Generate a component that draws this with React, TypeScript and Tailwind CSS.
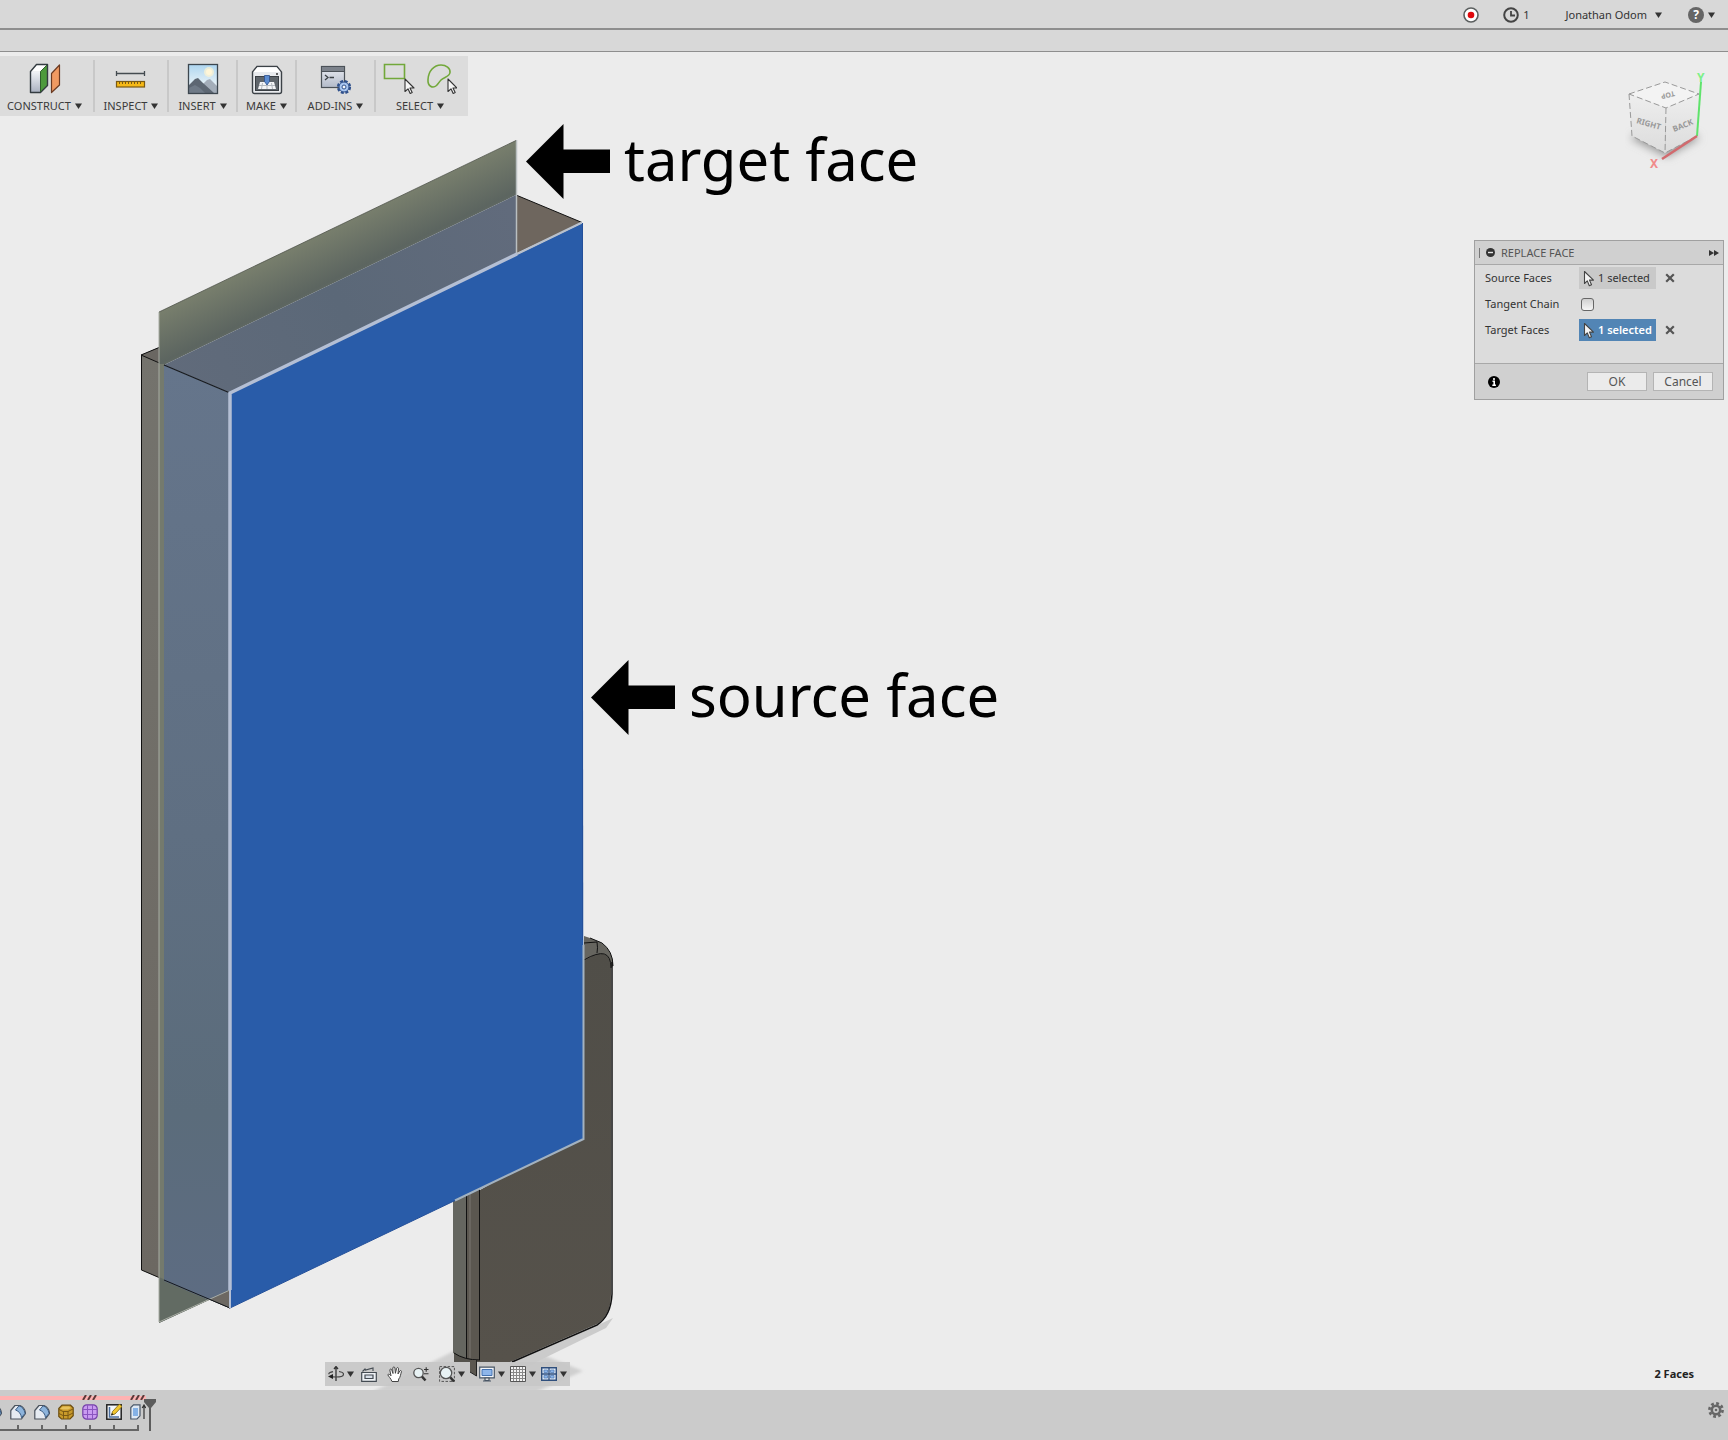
import React from 'react';
import clsx from 'clsx';

const Caret = ({ className }: { className?: string }) => (
  <svg width="7" height="6" viewBox="0 0 7 6" className={clsx('shrink-0', className)} aria-hidden="true">
    <path d="M0 0.5h7L3.5 6z" fill="#333" />
  </svg>
);

const Cursor = ({ className }: { className?: string }) => (
  <svg width="12" height="17" viewBox="0 0 12 17" className={className} aria-hidden="true">
    <path d="M1.5 1.5v12l2.8-2.6 2 4.8 2.2-1-2-4.6h4z" fill="#f4f4f4" stroke="#444" strokeWidth="1.1" strokeLinejoin="round" />
  </svg>
);

/* Toolbar icons */

const ConstructIcon = () => (
  <svg width="32" height="32" viewBox="0 0 32 32" className="shrink-0" aria-hidden="true">
    <defs>
      <linearGradient id="slab" x1="0" y1="0" x2="0" y2="1">
        <stop offset="0" stopColor="#f2f4f7" />
        <stop offset="1" stopColor="#a9b0bf" />
      </linearGradient>
    </defs>
    <path d="M1.5 8.5L7.5 1.5H18.5L11.5 8.5z" fill="#fff" />
    <path d="M1.5 8.5h10v21h-10z" fill="url(#slab)" />
    <path d="M11.5 8.5l7-7v21l-7 7z" fill="#4d9a3c" />
    <path d="M1.5 8.5l6-7h11v21l-7 7h-10z" fill="none" stroke="#333b40" strokeWidth="1.4" strokeLinejoin="round" />
    <path d="M11.5 29V8.5l6.5-6.5" fill="none" stroke="#2f5f2b" />
    <path d="M22.5 10.5l8-8.5v20l-8 7.5z" fill="#f09a62" stroke="#6b3a22" strokeWidth="1.2" strokeLinejoin="round" />
  </svg>
);

const InspectIcon = () => (
  <svg width="32" height="32" viewBox="0 0 32 32" className="shrink-0" aria-hidden="true">
    <path d="M1.5 8v5M29.5 8v5M1.5 10.5h28" stroke="#444b50" strokeWidth="1.3" fill="none" />
    <rect x="1.5" y="18.5" width="28" height="5.5" fill="#f6b916" stroke="#7a5a14" strokeWidth="1.2" />
    <path d="M4.5 19v2M7.5 19v2M10.5 19v2M13.5 19v2M16.5 19v2M19.5 19v2M22.5 19v2M25.5 19v2" stroke="#7a5a14" />
  </svg>
);

const InsertIcon = () => (
  <svg width="32" height="32" viewBox="0 0 32 32" className="shrink-0" aria-hidden="true">
    <defs>
      <linearGradient id="sky" x1="0" y1="0" x2="0" y2="1">
        <stop offset="0" stopColor="#aed6f0" />
        <stop offset="0.7" stopColor="#e6f1f7" />
      </linearGradient>
    </defs>
    <rect x="1.5" y="1.5" width="29" height="29" fill="url(#sky)" />
    <circle cx="22" cy="9" r="5" fill="#fff3cf" opacity="0.7" />
    <circle cx="22" cy="9" r="3" fill="#fff6d8" />
    <path d="M14 23l6-6 3-1 7 7v7H14z" fill="#a3adb9" />
    <path d="M2 22l6-6 3-1 5 5 11 10H2z" fill="#5d6773" />
    <path d="M2 25l6-3 5 3 5 5H2z" fill="#6f7a87" />
    <rect x="1.5" y="1.5" width="29" height="29" fill="none" stroke="#3d474f" strokeWidth="1.3" />
  </svg>
);

const MakeIcon = () => (
  <svg width="32" height="32" viewBox="0 0 32 32" className="shrink-0" aria-hidden="true">
    <path d="M1.5 9L6 3.5h20L30.5 9v19.5a2 2 0 0 1-2 2h-25a2 2 0 0 1-2-2z" fill="#e9ebee" stroke="#3c4247" strokeWidth="1.4" />
    <path d="M2.5 9L6.5 4.3h19L29.5 9z" fill="#fff" />
    <circle cx="26" cy="11" r="1" fill="#333" />
    <rect x="4.5" y="13.5" width="23" height="14" fill="#5f656b" stroke="#3a3f44" />
    <path d="M9 19h14l2 7H7z" fill="#f3f4f6" />
    <path d="M8 22.5h16M11.5 20l-1 6M16 20v6M20.5 20l1 6" stroke="#b4b9bf" />
    <path d="M13.5 12.5h5v6L16 22l-2.5-3.5z" fill="#5b8bd0" stroke="#2c4f8c" strokeWidth="0.8" />
  </svg>
);

const AddInsIcon = () => (
  <svg width="32" height="32" viewBox="0 0 32 32" className="shrink-0" aria-hidden="true">
    <defs>
      <linearGradient id="term" x1="0" y1="0" x2="0" y2="1">
        <stop offset="0" stopColor="#e9ecf2" />
        <stop offset="1" stopColor="#b3bac9" />
      </linearGradient>
    </defs>
    <rect x="1.5" y="3.5" width="23" height="21" fill="url(#term)" stroke="#4b5158" strokeWidth="1.2" />
    <rect x="2" y="4" width="22" height="4.5" fill="#7c828b" />
    <path d="M2 8.5h22" stroke="#4b5158" />
    <path d="M5 12l3 2.5-3 2.5M9.5 14.5h4.5" fill="none" stroke="#3c4247" strokeWidth="1.3" />
    <circle cx="24" cy="24" r="5.6" fill="none" stroke="#2f508c" strokeWidth="3" strokeDasharray="2.8 1.6" />
    <circle cx="24" cy="24" r="5" fill="#a9c6ef" stroke="#2f508c" />
    <circle cx="24" cy="24" r="2" fill="#f5f8fc" stroke="#2f508c" />
  </svg>
);

const SelectIcon = () => (
  <svg width="74" height="32" viewBox="0 0 74 32" className="shrink-0" aria-hidden="true">
    <path d="M1.5 1.5h20v14h-20z" fill="none" stroke="#72a83a" strokeWidth="1.6" />
    <path d="M22 16v12.5l3-2.7 2.2 4.7 2-1-2.2-4.5h4z" fill="#f6f6f6" stroke="#333" strokeWidth="1.1" strokeLinejoin="round" />
    <path d="M53.5 22.5c-4 3.5-9 .5-8.5-6C45.5 8 51 2 58 2c5 0 9.5 3 9 7.5-.5 4.5-6 4.5-9 7.5-1.8 1.8-2.5 3.5-4.5 5.5z" fill="none" stroke="#72a83a" strokeWidth="1.6" />
    <path d="M65 16v12.5l3-2.7 2.2 4.7 2-1-2.2-4.5h4z" fill="#f6f6f6" stroke="#333" strokeWidth="1.1" strokeLinejoin="round" />
  </svg>
);

const tools = [
  { label: 'CONSTRUCT', icon: <ConstructIcon />, cell: 'w-[93px] pr-1' },
  { label: 'INSPECT', icon: <InspectIcon />, cell: 'w-[74px] border-l-2' },
  { label: 'INSERT', icon: <InsertIcon />, cell: 'w-[69px] border-l-2' },
  { label: 'MAKE', icon: <MakeIcon />, cell: 'w-[59px] border-l-2' },
  { label: 'ADD-INS', icon: <AddInsIcon />, cell: 'w-[79px] border-l-2' },
  { label: 'SELECT', icon: <SelectIcon />, cell: 'w-[94px] border-l-2 pr-1' },
];

const Toolbar = () => (
  <div className="absolute left-0 top-1 flex bg-[#dcdcdc] py-1">
    {tools.map((tool) => (
      <button
        key={tool.label}
        className={clsx('flex h-[52px] flex-col items-center justify-end gap-[5px] border-[#c8c8c8]', tool.cell)}
      >
        {tool.icon}
        <span className="flex items-center gap-1 whitespace-nowrap text-[11px] leading-3 text-[#3a3a3a]">
          {tool.label}
          <Caret />
        </span>
      </button>
    ))}
  </div>
);

/* Top bars */

const TopBar = () => (
  <header className="shrink-0">
    <div className="flex h-[30px] items-center justify-end border-b-2 border-[#8e8e8e] bg-[#d8d8d8] pr-[13px] pt-[2px] text-[11px] text-[#333]">
      <button aria-label="Record" className="mr-6">
        <svg width="16" height="16" viewBox="0 0 16 16">
          <circle cx="8" cy="8" r="7" fill="#fff" stroke="#5b5f5f" strokeWidth="1.6" />
          <circle cx="8" cy="8" r="3.3" fill="#e0080c" />
        </svg>
      </button>
      <button className="mr-9 flex items-center gap-1">
        <svg width="16" height="16" viewBox="0 0 16 16" aria-hidden="true">
          <circle cx="8" cy="8" r="6.8" fill="none" stroke="#444" strokeWidth="2" />
          <path d="M8 4v4.5h4" fill="none" stroke="#444" strokeWidth="1.8" />
        </svg>
        1
      </button>
      <button className="mr-[26px] flex items-center gap-2">
        Jonathan Odom
        <Caret />
      </button>
      <button aria-label="Help" className="flex items-center gap-1">
        <span className="flex size-4 items-center justify-center rounded-full bg-[#666] text-xs font-bold leading-4 text-white">?</span>
        <Caret />
      </button>
    </div>
    <div className="h-[22px] border-b border-[#8e8e8e] bg-[#d8d8d8]" />
  </header>
);

/* 3D model; the view box starts at the top edge of the viewport area */

const Model = () => (
  <svg width="640" height="1338" viewBox="0 52 640 1338" className="absolute left-0 top-0" aria-hidden="true">
    <defs>
      <linearGradient id="plane" gradientUnits="userSpaceOnUse" x1="310" y1="230" x2="338" y2="288">
        <stop offset="0" stopColor="#7d836f" />
        <stop offset="0.85" stopColor="#5c6560" />
        <stop offset="1" stopColor="#656d66" />
      </linearGradient>
      <linearGradient id="planeTop" gradientUnits="userSpaceOnUse" x1="164" y1="390" x2="517" y2="220">
        <stop offset="0" stopColor="#616b7b" />
        <stop offset="0.5" stopColor="#5b6878" />
        <stop offset="1" stopColor="#616b7c" />
      </linearGradient>
      <linearGradient id="side" x1="0" y1="0" x2="0" y2="1">
        <stop offset="0" stopColor="#65758b" />
        <stop offset="0.5" stopColor="#5f6f82" />
        <stop offset="0.8" stopColor="#5b6c7b" />
        <stop offset="1" stopColor="#5d6c82" />
      </linearGradient>
      <linearGradient id="backStrip" x1="0" y1="0" x2="0" y2="1">
        <stop offset="0" stopColor="#74736d" />
        <stop offset="1" stopColor="#6c6862" />
      </linearGradient>
      <linearGradient id="phone" x1="0" y1="0" x2="0" y2="1">
        <stop offset="0" stopColor="#504e48" />
        <stop offset="1" stopColor="#56524b" />
      </linearGradient>
      <filter id="soft" x="-10%" y="-10%" width="120%" height="120%">
        <feGaussianBlur stdDeviation="1.5" />
      </filter>
    </defs>

    {/* Ground shadow */}
    <path d="M454 1351L372 1392H536L583 1371 543 1355 540 1340z" fill="#cfcfcf" filter="url(#soft)" />
    <path d="M510 1364L596 1326 613 1318 606 1328 520 1370z" fill="#cbcbcb" />

    {/* Rear body */}
    <path d="M480 1190L584 1130V960L596 954Q611 950 611 967V1294Q611 1315 597 1324L510 1362H480z" fill="url(#phone)" />
    <path d="M584 936L590 938 600 942Q613 950 613 966L611 968Q611 952 596 954L584 961z" fill="#66655f" />
    <path d="M584 943L597 942Q598 948 597 953M584 960Q611 944 611 968M590 938L602 943Q613 951 613 966" fill="none" stroke="#111" />
    <path d="M612 962V1294Q611 1316 597 1325L512 1362" fill="none" stroke="#111" strokeWidth="1.5" />
    <path d="M453 1195H467V1359L453 1353z" fill="#656660" />
    <path d="M466 1190H480V1360H466z" fill="#5b5750" />
    <path d="M470 1185V1359" stroke="#6a6660" strokeWidth="2" />
    <path d="M454 1353L466 1358 480 1360 500 1362H454z" fill="#55534d" />
    <path d="M466.5 1190V1358M479.5 1185V1360M454 1353Q464 1360 480 1360" fill="none" stroke="#111" />

    {/* Box behind the plane */}
    <path d="M141 355L160 347V1278L141 1270z" fill="url(#backStrip)" />
    <path d="M141 355L160 347V363z" fill="#6a6762" />
    <path d="M516 195L582 222.5 517 253z" fill="#6e665e" />
    <path d="M141 355L164 365M141.5 355V1270L230 1308M516 195L582 222.5M141 355L159 347.5" fill="none" stroke="#111" />
    <path d="M205 1297L230 1286V1308z" fill="#6c6862" />

    {/* Target plane */}
    <path d="M159 312L516 140.5V195L164 365V1280L209 1300 159 1323z" fill="url(#plane)" />
    <path d="M159 364H165V1281H159z" fill="#747a6d" />
    <path d="M159 1277L209 1300 159 1323z" fill="#626b63" />
    <path d="M164 365L516 195 517 254 230 393z" fill="url(#planeTop)" />
    <path d="M164 365L230 393V1290L209 1300 164 1281z" fill="url(#side)" />
    <path d="M159 312V1322L230 1290" fill="none" stroke="#a9ada4" />
    <path d="M516.5 140V254" fill="none" stroke="#b9bfc0" strokeWidth="1.5" />
    <path d="M159 312L516 140.5" stroke="#44483f" strokeWidth="0.7" />
    <path d="M164 365L230 393" stroke="#15181c" strokeWidth="1.2" />
    <path d="M164 1280L230 1308" stroke="#15181c" />

    {/* Source face */}
    <path d="M231 393L582.5 223 583.5 1139 230 1308z" fill="#295ca9" />
    <path d="M230 1308L455 1200.5" stroke="#24509a" strokeWidth="1" />
    <path d="M455 1200.5L583.5 1139V945" fill="none" stroke="#a3b2c0" strokeWidth="2" />
    <path d="M517 254L582 222.5" stroke="#b9c1cc" strokeWidth="2" />
    <path d="M230 1308V1290" stroke="#b4bfd4" strokeWidth="2" />
    <path d="M230 1290V393L517 254" fill="none" stroke="#b4bfd4" strokeWidth="3.5" />
    <path d="M582.5 223V940" stroke="#24509a" />
  </svg>
);

const Arrow = () => (
  <svg width="84" height="75" viewBox="0 0 84 75" className="shrink-0" aria-hidden="true">
    <path d="M0 37.5L37.5 0V25.5H84V49H37.5V75z" fill="#000" />
  </svg>
);

const Note = ({ text, className }: { text: string; className: string }) => (
  <div className={clsx('absolute flex items-center gap-[14px]', className)}>
    <Arrow />
    <p className="whitespace-nowrap pb-[6px] text-[58px] leading-[68px] text-black">{text}</p>
  </div>
);

const ViewCube = () => (
  <svg width="90" height="110" viewBox="1625 65 90 110" className="absolute right-[13px] top-[13px]" role="img" aria-label="View cube">
    <defs>
      <filter id="cubeShadow" x="-30%" y="-30%" width="160%" height="160%">
        <feGaussianBlur stdDeviation="4" />
      </filter>
      <linearGradient id="cubeFace" x1="0" y1="0" x2="0" y2="1">
        <stop offset="0" stopColor="#eeeeee" />
        <stop offset="1" stopColor="#dcdcdc" />
      </linearGradient>
    </defs>
    <path d="M1630 138L1665 120 1700 138 1667 157z" fill="#999" filter="url(#cubeShadow)" />
    <path d="M1629 94L1665 82 1699 94 1666 108z" fill="#f3f3f3" />
    <path d="M1629 94L1666 108 1665 153 1632 136z" fill="url(#cubeFace)" />
    <path d="M1666 108L1699 94 1697 136 1665 153z" fill="url(#cubeFace)" />
    <path d="M1629 94L1665 82 1699 94 1666 108zL1632 136 1665 153 1697 136M1666 108L1665 153" fill="none" stroke="#999" strokeDasharray="6 3" />
    <path d="M1701 82L1697 136" stroke="#5fe36b" strokeWidth="2" />
    <path d="M1697 136L1662 159" stroke="#d26a6e" strokeWidth="2.5" />
    <text x="1636" y="123" transform="rotate(16 1636 123)" fontSize="8" fontWeight="700" fill="#999">RIGHT</text>
    <text x="1674" y="132" transform="rotate(-22 1674 132)" fontSize="8" fontWeight="700" fill="#999">BACK</text>
    <text x="1674" y="91" transform="rotate(166 1674 91)" fontSize="7" fontWeight="700" fill="#999">TOP</text>
    <text x="1697" y="82" fontSize="12" fontWeight="700" fill="#7df088">Y</text>
    <text x="1650" y="168" fontSize="12" fontWeight="700" fill="#f08a8a">X</text>
  </svg>
);

/* Replace face dialog */

const Clear = ({ label }: { label: string }) => (
  <button aria-label={label} className="ml-[9px]">
    <svg width="10" height="10" viewBox="0 0 10 10">
      <path d="M1.2 1.2l7.6 7.6M8.8 1.2L1.2 8.8" stroke="#555" strokeWidth="2.2" />
    </svg>
  </button>
);

const SelectionRow = ({ label, active }: { label: string; active?: boolean }) => (
  <div className="flex h-[26px] items-center">
    <span className="w-[94px]">{label}</span>
    <button
      aria-label={`${label}: 1 selected`}
      className={clsx(
        'flex h-[22px] w-[77px] items-center gap-[3px] whitespace-nowrap pl-1',
        active ? 'bg-[#5285b5] font-semibold text-white' : 'bg-[#c9c9c9]',
      )}
    >
      <Cursor />
      1 selected
    </button>
    <Clear label={`Clear ${label}`} />
  </div>
);

const ReplaceFaceDialog = () => (
  <section className="absolute right-1 top-[188px] w-[250px] border border-[#a0a0a0] bg-[#dcdcdc] text-[11px] leading-4 text-[#333]">
    <div className="flex h-6 items-center border-b border-[#a8a8a8] bg-[#d0d0d0] pl-[2px] pr-1">
      <span className="h-[10px] w-[3px] border-r border-[#777]" />
      <button aria-label="Collapse" className="ml-[6px]">
        <svg width="9" height="9" viewBox="0 0 9 9">
          <circle cx="4.5" cy="4.5" r="4.5" fill="#333" />
          <path d="M2 4.5h5" stroke="#e6e6e6" strokeWidth="1.4" />
        </svg>
      </button>
      <h2 className="ml-[6px] flex-1 text-[#555]">REPLACE FACE</h2>
      <button aria-label="Dock">
        <svg width="10" height="6" viewBox="0 0 10 6">
          <path d="M0 0l5 3-5 3zM5 0l5 3-5 3z" fill="#333" />
        </svg>
      </button>
    </div>
    <div className="pb-[20px] pl-[10px]">
      <SelectionRow label="Source Faces" />
      <div className="flex h-[26px] items-center">
        <label htmlFor="tangent" className="w-24">Tangent Chain</label>
        <input
          id="tangent"
          type="checkbox"
          className="size-[13px] appearance-none rounded-[3px] border border-[#666] bg-linear-to-b from-[#d0d0d0] to-[#f6f6f6]"
        />
      </div>
      <SelectionRow label="Target Faces" active />
    </div>
    <div className="flex h-9 items-center border-t border-[#a8a8a8] bg-[#d0d0d0] pl-[13px] pr-[10px] text-[12px] text-[#555]">
      <button aria-label="Information" className="mr-auto">
        <svg width="12" height="12" viewBox="0 0 12 12">
          <circle cx="6" cy="6" r="6" fill="#000" />
          <path d="M6 2v2M4.5 5.2H6.2V9M4.3 9.2h3.6" stroke="#fff" strokeWidth="1.6" fill="none" />
        </svg>
      </button>
      <button className="h-[19px] w-[60px] border border-[#b4b4b4] bg-[#ebebeb]">OK</button>
      <button className="ml-[6px] h-[19px] w-[60px] border border-[#b4b4b4] bg-[#ebebeb]">Cancel</button>
    </div>
  </section>
);

/* Navigation bar */

const navItems = [
  {
    label: 'Orbit',
    menu: true,
    cell: 'w-[33px]',
    icon: (
      <>
        <path d="M8 1v14M6 3l2-2.5L10 3" fill="none" stroke="#333" strokeWidth="1.3" />
        <path d="M11 5.5c3 .5 4.5 1.5 4.5 2.7C15.5 10 12 11 8 11s-5-.3-6-.8M5 5.7C2.5 6.2.8 7 .8 8.2" fill="none" stroke="#444" strokeWidth="1.2" />
        <path d="M0 10.5L5 8v5z" fill="#222" />
      </>
    ),
  },
  {
    label: 'Look At',
    cell: 'w-[26px]',
    icon: (
      <>
        <path d="M.7 6.5h14.6v8.8H.7z" fill="#eef1f5" stroke="#444b52" strokeWidth="1.2" />
        <path d="M4 9h8v3.5H4z" fill="#d8dfe8" stroke="#444b52" strokeWidth="1.2" />
        <path d="M1.5 5.5L4 3l.5 1L12 2v3" fill="none" stroke="#444b52" strokeWidth="1.1" />
      </>
    ),
  },
  {
    label: 'Pan',
    cell: 'w-[26px]',
    icon: (
      <path
        d="M5 15.5C4 12.5 1.5 10.5.8 8.7 1.5 7.7 3 8.5 4 9.8L2.8 4c.2-1.3 1.5-1.3 2 0L6 7.5 5.8 2c.2-1.4 1.9-1.4 2.1 0l.5 5.3 1.2-5c.5-1.2 2-.9 1.9.4L11 8l1.8-3c.8-1 2-.3 1.6.8-.8 2.5-1 5.5-2.7 7.2l-.4 2.5z"
        fill="#fff"
        stroke="#444"
      />
    ),
  },
  {
    label: 'Zoom',
    cell: 'w-[26px]',
    icon: (
      <>
        <path d="M8.5 10l4 4.5" stroke="#333" strokeWidth="2.6" />
        <circle cx="5.5" cy="7" r="4.7" fill="#e8f2f4" stroke="#555" strokeWidth="1.3" />
        <path d="M11 3.5h4.5M13.2 1.2v4.5M11 7.8h4.5" stroke="#333" strokeWidth="1.1" />
      </>
    ),
  },
  {
    label: 'Zoom Window',
    menu: true,
    cell: 'w-[40px]',
    icon: (
      <>
        <path d="M.6.6h14.8v14.8H.6z" fill="none" stroke="#555" strokeDasharray="2.5 1.5" />
        <path d="M11 11l4 4.5" stroke="#333" strokeWidth="2.6" />
        <circle cx="7" cy="7" r="5.7" fill="#e8f2f4" stroke="#555" strokeWidth="1.3" />
      </>
    ),
  },
  {
    label: 'Display Settings',
    menu: true,
    cell: 'w-[31px]',
    icon: (
      <>
        <path d="M.7 1.2h14.6v10.6H.7z" fill="#f2f5f9" stroke="#4a5766" strokeWidth="1.2" />
        <path d="M3 3.5h10v6H3z" fill="#8eb6ea" stroke="#4472b0" />
        <path d="M6 12h4v2.5H6zM4 15h8" fill="#ddd" stroke="#4a5766" strokeWidth="1.2" />
      </>
    ),
  },
  {
    label: 'Grid and Snaps',
    menu: true,
    cell: 'w-[31px]',
    icon: (
      <>
        <path d="M.5.5h15v15H.5z" fill="#f4f4f4" stroke="#555" />
        <path d="M3.5 1v14M6.5 1v14M9.5 1v14M12.5 1v14M1 3.5h14M1 6.5h14M1 9.5h14M1 12.5h14" stroke="#888" />
      </>
    ),
  },
  {
    label: 'Viewports',
    menu: true,
    cell: 'w-[29px]',
    icon: (
      <>
        <path d="M.7 1.7h14.6v12.6H.7z" fill="#dfe9f6" stroke="#2f4f7d" strokeWidth="1.4" />
        <path d="M3 4h3.5v2.5H3zM9.5 4H13v2.5H9.5zM3 9.5h3.5V12H3zM9.5 9.5H13V12H9.5z" fill="#8eb6ea" stroke="#5580b8" strokeWidth="0.8" />
        <path d="M8 2v12M1 8h14" stroke="#2f4f7d" strokeWidth="1.3" />
      </>
    ),
  },
];

const NavBar = () => (
  <nav className="absolute bottom-1 left-[325px] flex h-6 items-center bg-[#c6c6c6]/90 pl-[3px]">
    {navItems.map((item) => (
      <button key={item.label} aria-label={item.label} className={clsx('flex items-center gap-[3px]', item.cell)}>
        <svg width="16" height="16" viewBox="0 0 16 16" className="shrink-0">
          {item.icon}
        </svg>
        {item.menu && <Caret />}
      </button>
    ))}
    {/* Stem of the rear body, seen in front of the bar */}
    <svg width="8" height="18" viewBox="0 0 8 18" className="absolute left-[145px] top-[-2px]" aria-hidden="true">
      <path d="M0 0h7v16L0 12z" fill="#5b5750" />
      <path d="M6.5 0v16L0 12" fill="none" stroke="#222" />
    </svg>
  </nav>
);

/* Timeline */

const Fillet = () => (
  <>
    <path d="M.8 6.5L5 1.5h5q5 2 5.5 8l-4 5.5H.8z" fill="#e6ebf2" stroke="#4a525c" strokeWidth="1.2" strokeLinejoin="round" />
    <path d="M5.5 6L9 1.8q5 1.7 6 7.5l-3.5 4.5Q11 8 5.5 6z" fill="#8db4dc" stroke="#3f5f86" />
  </>
);

const features = [
  { name: 'Fillet 1', icon: <Fillet /> },
  { name: 'Fillet 2', icon: <Fillet /> },
  { name: 'Fillet 3', icon: <Fillet /> },
  {
    name: 'Coil',
    icon: (
      <>
        <path d="M.8 4.5L4 1.2h8.5l2.7 2.5v8L12 15H3.5L.8 12.5z" fill="#c99a2a" stroke="#6b4d10" strokeWidth="1.2" />
        <path d="M1 5.5l4 2h5l5-2.5M1 9.5l4 2h5l5-2.5M5 4h6M5.5 7.5V15M10 7.5V15" fill="none" stroke="#7c5a14" />
        <path d="M2 4.5l3-2h6l2 1.5-3 1.5H5z" fill="#e7c25c" />
      </>
    ),
  },
  {
    name: 'Form',
    warn: true,
    icon: (
      <>
        <rect x="0.8" y="0.8" width="14.4" height="14.4" rx="4" fill="#c99bf0" stroke="#7440a8" strokeWidth="1.2" />
        <path d="M5.5 1v14M10.5 1v14M1 5.5h14M1 10.5h14" stroke="#8a55c0" />
      </>
    ),
  },
  {
    name: 'Sketch',
    icon: (
      <>
        <rect x="0.8" y="0.8" width="14.4" height="14.4" fill="#f4f7fa" stroke="#222" strokeWidth="1.5" />
        <path d="M3.5 3v10H13" fill="none" stroke="#4c6f9e" strokeWidth="1.5" />
        <path d="M5.5 11l1-3.5L13.5 0l2.5 2.5L9 10z" fill="#f2c62e" stroke="#7a6210" strokeWidth="0.8" />
        <path d="M5 11.5l1-2.5 1.5 1.5z" fill="#222" />
      </>
    ),
  },
  {
    name: 'Replace Face',
    warn: true,
    icon: (
      <>
        <path d="M.8 3.5L3.5.8H10v11L7 15H.8z" fill="#dfe9f4" stroke="#4a5868" strokeWidth="1.2" />
        <path d="M3 4h5v8H3z" fill="#85b2e6" />
        <path d="M14 15V2M12.2 4l1.8-3 1.8 3" fill="none" stroke="#333" strokeWidth="1.2" />
      </>
    ),
  },
];

const Timeline = () => (
  <footer className="flex h-[50px] shrink-0 items-start justify-between overflow-hidden bg-[#cbcbcb] pr-1">
    <div className="relative mt-[6px]">
      <div className="h-1 w-[146px] bg-[#ffb2b2]" />
      <ol className="-ml-[18px] flex">
        {features.map((feature) => (
          <li key={feature.name} className="relative flex h-[29px] w-6 flex-col items-center pt-1">
            {feature.warn && (
              <svg width="16" height="5" viewBox="0 0 16 5" className="absolute -top-[5px]" aria-hidden="true">
                <path d="M1 5l3-5M6 5l3-5M11 5l3-5" stroke="#5c3a3a" strokeWidth="2" />
              </svg>
            )}
            <button aria-label={feature.name}>
              <svg width="16" height="16" viewBox="0 0 16 16" className="block">
                {feature.icon}
              </svg>
            </button>
            <span className="mt-auto h-1 w-[2px] bg-[#666]" />
          </li>
        ))}
      </ol>
      <div className="h-[2px] w-[139px] bg-[#666]" />
      <svg width="12" height="32" viewBox="0 0 12 32" className="absolute left-[144px] top-[3px]" aria-hidden="true">
        <path d="M0 0h12v3L7 9v23H5V9L0 3z" fill="#5c5c5c" />
      </svg>
    </div>
    <button aria-label="Preferences" className="mt-3">
      <svg width="16" height="16" viewBox="0 0 16 16">
        <circle cx="8" cy="8" r="6.6" fill="none" stroke="#666" strokeWidth="2.6" strokeDasharray="2.8 2.38" />
        <circle cx="8" cy="8" r="4.2" fill="none" stroke="#666" strokeWidth="2.6" />
        <circle cx="8" cy="8" r="1.3" fill="#666" />
      </svg>
    </button>
  </footer>
);

const App = () => {
  return (
    <div className="flex min-h-screen flex-col bg-[#ececec] font-['Noto_Sans','Open_Sans',sans-serif]">
      <TopBar />
      <main className="relative min-h-[1338px] flex-1 overflow-hidden">
        <Model />
        <Toolbar />
        <Note text="target face" className="left-[526px] top-[72px]" />
        <Note text="source face" className="left-[591px] top-[608px]" />
        <ViewCube />
        <ReplaceFaceDialog />
        <NavBar />
        <p className="absolute bottom-2 right-[34px] text-[11px] font-bold leading-4 text-[#222]">2 Faces</p>
      </main>
      <Timeline />
    </div>
  );
};

export default App;
